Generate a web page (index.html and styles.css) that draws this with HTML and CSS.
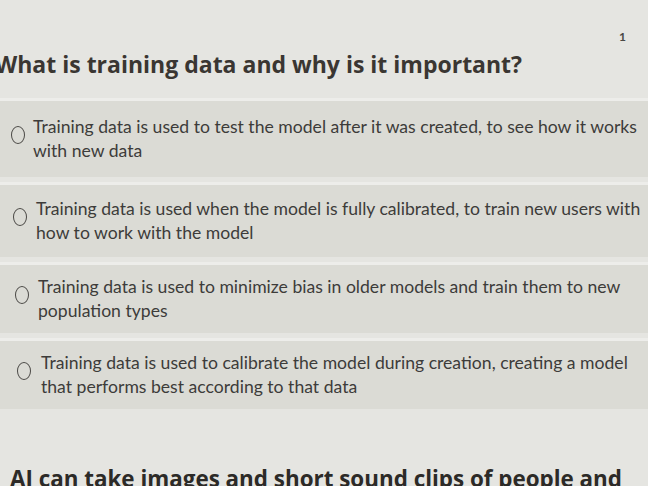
FILE: index.html
```html
<!DOCTYPE html>
<html>
<head>
<meta charset="utf-8">
<link rel="stylesheet" href="styles.css">
</head>
<body>
<div class="page">
  <div class="counter">1</div>
  <h1 class="title">What is training data and why is it important?</h1>
  <div class="options">
    <div class="option o1">
      <span class="radio"></span>
      <div class="label">Training data is used to test the model after it was created, to see how it works<br>with new data</div>
    </div>
    <div class="option o2">
      <span class="radio"></span>
      <div class="label">Training data is used when the model is fully calibrated, to train new users with<br>how to work with the model</div>
    </div>
    <div class="option o3">
      <span class="radio"></span>
      <div class="label">Training data is used to minimize bias in older models and train them to new<br>population types</div>
    </div>
    <div class="option o4">
      <span class="radio"></span>
      <div class="label">Training data is used to calibrate the model during creation, creating a model<br>that performs best according to that data</div>
    </div>
  </div>
  <h2 class="next">AI can take images and short sound clips of people and</h2>
</div>
</body>
</html>
```

FILE: styles.css
```css
html, body {
  margin: 0;
  padding: 0;
  width: 648px;
  height: 486px;
  overflow: hidden;
  background: #e5e5e1;
}
.page {
  position: relative;
  height: 486px;
  overflow: hidden;
  font-family: "Lato", "Noto Sans", sans-serif;
  color: #3b3a38;
}
.counter {
  position: absolute;
  left: 619px;
  top: 29px;
  font-size: 12px;
  font-weight: 700;
  color: #4a4844;
}
.title {
  margin: 0;
  padding: 47px 0 0 0;
  margin-left: -5px;
  font-family: "Open Sans", sans-serif;
  font-size: 23px;
  font-weight: 700;
  line-height: 34px;
  color: #3a3632;
  white-space: nowrap;
}
.options {
  margin-top: 20px;
  display: flex;
  flex-direction: column;
  gap: 8px;
}
.option {
  background: #dbdbd5;
  height: 72px;
  display: flex;
  align-items: center;
  box-shadow: 0 -3px 0 #ededea;
}
.radio {
  flex: none;
  width: 14px;
  height: 18px;
  border: 1.6px solid #4a4845;
  border-radius: 50%;
  box-sizing: border-box;
  margin-bottom: 8px;
}
.label {
  font-size: 17.6px;
  line-height: 24px;
  white-space: nowrap;
  color: #3d3c3a;
}
.o1 { padding-left: 11px; height: 76px; }
.o1 .label { padding-left: 8px; }
.o2 { padding-left: 13px; }
.o2 .label { padding-left: 9px; }
.o3 { padding-left: 15px; height: 68px; }
.o3 .label { padding-left: 9px; }
.o4 { padding-left: 17px; height: 68px; }
.o4 .label { padding-left: 10px; }
.next {
  margin: 0;
  margin-top: 55px;
  padding-left: 10px;
  font-family: "Open Sans", sans-serif;
  font-size: 22.4px;
  font-weight: 700;
  line-height: 30px;
  color: #2c2a27;
  white-space: nowrap;
}
```
